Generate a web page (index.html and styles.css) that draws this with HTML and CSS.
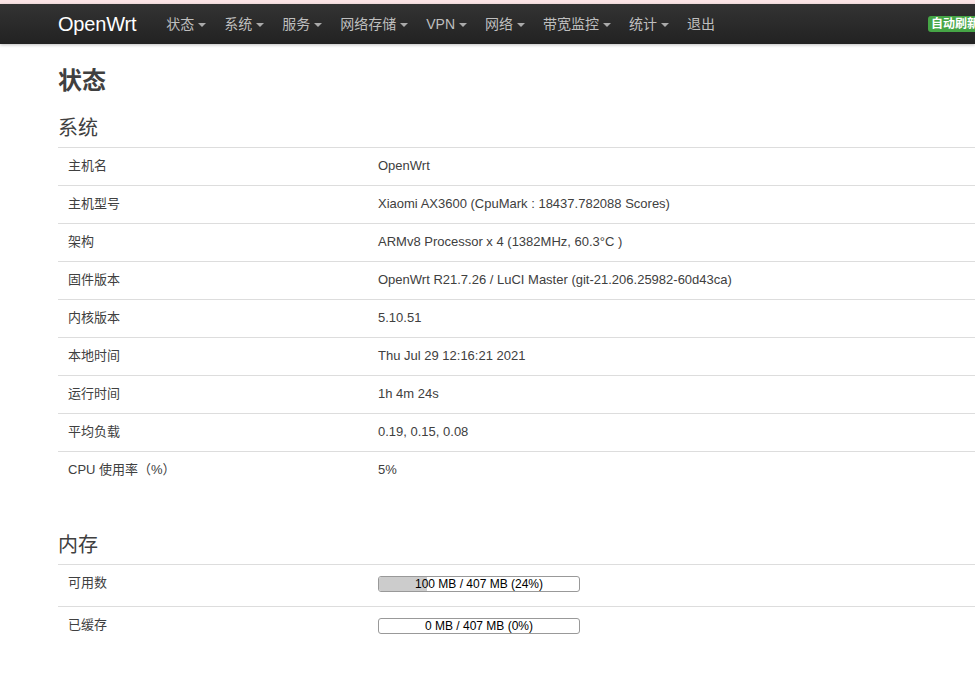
FILE: index.html
```html
<!DOCTYPE html>
<html lang="zh-cn">
<head>
    <meta charset="UTF-8">
    <title>OpenWrt - 状态 - LuCI</title>
    <link rel="stylesheet" href="styles.css">
</head>
<body>
    <div class="topline"></div>
    <header class="navbar">
        <div class="navbar-inner">
            <a class="brand" href="#">OpenWrt</a>
            <ul class="nav">
                <li class="dropdown">状态</li>
                <li class="dropdown">系统</li>
                <li class="dropdown">服务</li>
                <li class="dropdown">网络存储</li>
                <li class="dropdown">VPN</li>
                <li class="dropdown">网络</li>
                <li class="dropdown">带宽监控</li>
                <li class="dropdown">统计</li>
                <li>退出</li>
            </ul>
            <span class="label-success">自动刷新 开</span>
        </div>
    </header>

    <div class="container">
        <h2 class="page-title">状态</h2>

        <div class="cbi-section">
            <h3>系统</h3>
            <table class="table">
                <tr><td class="td-left">主机名</td><td>OpenWrt</td></tr>
                <tr><td class="td-left">主机型号</td><td>Xiaomi AX3600 (CpuMark : 18437.782088 Scores)</td></tr>
                <tr><td class="td-left">架构</td><td>ARMv8 Processor x 4 (1382MHz, 60.3°C )</td></tr>
                <tr><td class="td-left">固件版本</td><td>OpenWrt R21.7.26 / LuCI Master (git-21.206.25982-60d43ca)</td></tr>
                <tr><td class="td-left">内核版本</td><td>5.10.51</td></tr>
                <tr><td class="td-left">本地时间</td><td>Thu Jul 29 12:16:21 2021</td></tr>
                <tr><td class="td-left">运行时间</td><td>1h 4m 24s</td></tr>
                <tr><td class="td-left">平均负载</td><td>0.19, 0.15, 0.08</td></tr>
                <tr><td class="td-left">CPU 使用率（%）</td><td>5%</td></tr>
            </table>
        </div>

        <div class="cbi-section">
            <h3>内存</h3>
            <table class="table">
                <tr>
                    <td class="td-left">可用数</td>
                    <td>
                        <div class="cbi-progressbar">
                            <div class="fill" style="width: 24%"></div>
                            <span class="bar-text">100 MB / 407 MB (24%)</span>
                        </div>
                    </td>
                </tr>
                <tr>
                    <td class="td-left">已缓存</td>
                    <td>
                        <div class="cbi-progressbar">
                            <div class="fill" style="width: 0%"></div>
                            <span class="bar-text">0 MB / 407 MB (0%)</span>
                        </div>
                    </td>
                </tr>
            </table>
        </div>
    </div>
</body>
</html>
```

FILE: styles.css
```css
html, body {
    margin: 0;
    padding: 0;
    overflow: hidden;
}

body {
    font-family: "Liberation Sans", Arial, "Noto Sans CJK SC", sans-serif;
    font-size: 13px;
    line-height: 18px;
    color: #404040;
    background: #fff;
}

.topline {
    height: 4px;
    background: #fbe4e5;
}

.navbar {
    height: 40px;
    background: linear-gradient(to bottom, #333 0%, #222 100%);
    box-shadow: 0 1px 3px rgba(0, 0, 0, 0.25);
}

.navbar-inner {
    display: flex;
    align-items: center;
    height: 40px;
    padding-left: 58px;
    width: 1000px;
}

.brand {
    font-size: 20px;
    color: #fff;
    text-decoration: none;
    padding-right: 20px;
    letter-spacing: -0.2px;
}

.nav {
    display: flex;
    list-style: none;
    margin: 0;
    padding: 0;
}

.nav li {
    font-size: 14px;
    color: #bfbfbf;
    padding: 0 9px;
    line-height: 40px;
}

.nav li:first-child {
    padding-left: 10px;
}

.dropdown::after {
    content: "";
    display: inline-block;
    margin-left: 4px;
    vertical-align: middle;
    border-top: 4px solid #aaa;
    border-left: 4px solid transparent;
    border-right: 4px solid transparent;
}

.label-success {
    margin-left: 204px;
    background: #46a546;
    color: #fff;
    font-weight: bold;
    font-size: 12px;
    line-height: 16px;
    padding: 0 3px;
    border-radius: 3px;
    white-space: nowrap;
}

.container {
    margin-left: 58px;
    width: 1000px;
}

.page-title {
    font-size: 24px;
    font-weight: bold;
    line-height: 36px;
    margin: 19px 0 0;
}

.cbi-section h3 {
    font-size: 20px;
    font-weight: normal;
    line-height: 27px;
    margin: 16px 0 5px;
}

.cbi-section + .cbi-section {
    margin-top: 43px;
}

.table {
    width: 100%;
    border-collapse: collapse;
}

.table td {
    padding: 9px 10px 10px;
    border-top: 1px solid #ddd;
    vertical-align: top;
    text-align: left;
}

.td-left {
    width: 290px;
}

.cbi-progressbar {
    position: relative;
    width: 200px;
    height: 14px;
    margin: 2px 0 4px;
    border: 1px solid #999;
    border-radius: 3px;
    background: #fff;
    overflow: hidden;
}

.cbi-progressbar .fill {
    height: 100%;
    background: #ccc;
}

.bar-text {
    position: absolute;
    left: 0;
    right: 0;
    top: 0;
    text-align: center;
    font-size: 12px;
    line-height: 14px;
    color: #000;
}
```
